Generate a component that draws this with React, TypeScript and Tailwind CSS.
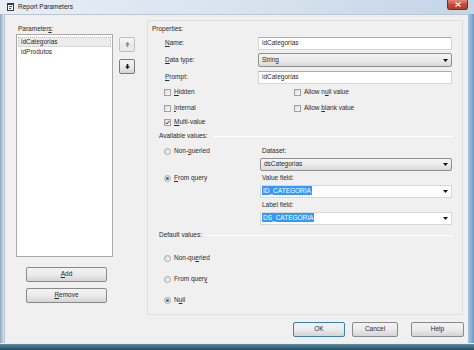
import type { ReactNode } from 'react';

// mnemonic underline
const U = ({ c }: { c: string }) => <span className="underline underline-offset-[1px]">{c}</span>;

const Check = ({ checked }: { checked?: boolean }) => (
    <span className="w-[7px] h-[7px] shrink-0 border border-[#a0a0a0] bg-linear-to-br from-[#dcdcdc] to-[#fbfbfb] flex items-center justify-center">
        {checked && (
            <svg width="5" height="5" viewBox="0 0 5 5">
                <path d="M0.5 2.5 L2 4 L4.5 0.8" stroke="#3a4a6c" strokeWidth="1" fill="none" />
            </svg>
        )}
    </span>
);

const Radio = ({ checked }: { checked?: boolean }) => (
    <span className="w-[7px] h-[7px] shrink-0 rounded-full border border-[#a8a8a8] bg-linear-to-br from-[#d8d8d8] to-[#fbfbfb] flex items-center justify-center">
        {checked && <span className="w-[3px] h-[3px] rounded-full bg-[#3a6a92]" />}
    </span>
);

const Btn = ({ className, children }: { className: string; children: ReactNode }) => (
    <div className={`h-[15px] rounded-[2px] border bg-linear-to-b from-[#f3f3f3] via-[#ebebeb] to-[#d5d5d5] flex items-center justify-center ${className}`}>
        {children}
    </div>
);

const Arrow = () => (
    <svg width="5" height="3" viewBox="0 0 5 3" className="shrink-0">
        <path d="M0 0 H5 L2.5 3 Z" fill="#111" />
    </svg>
);

const CheckItem = ({ checked, children, className = '' }: { checked?: boolean; children: ReactNode; className?: string }) => (
    <div className={`flex items-center gap-[3px] ${className}`}>
        <Check checked={checked} />
        <span>{children}</span>
    </div>
);

const RadioItem = ({ checked, children }: { checked?: boolean; children: ReactNode }) => (
    <div className="h-[10px] flex items-center gap-[3px] pl-[16px]">
        <Radio checked={checked} />
        <span>{children}</span>
    </div>
);

const SectionTitle = ({ children, mt }: { children: ReactNode; mt: string }) => (
    <div className={`h-[10px] flex items-center pl-[11px] pr-[9px] gap-[5px] ${mt}`}>
        <span className="whitespace-nowrap">{children}</span>
        <div className="flex-1 h-px bg-[#d5d5d5] border-b border-white" />
    </div>
);

export default function App() {
    return (
        <div className="w-[474px] h-[350px] flex flex-col overflow-hidden font-['Liberation_Sans',Arial,sans-serif] text-[6.5px] text-[#2a2a2a] leading-none bg-[#c9d8e8]">
            {/* title bar */}
            <div className="h-[14px] flex items-start bg-linear-to-r from-[#e8eef5] via-[#d8e3ef] to-[#c3d5e8]">
                <div className="flex items-center gap-[4px] pl-[7px] pt-[3px]">
                    <svg width="7" height="8" viewBox="0 0 7 8">
                        <rect x="0" y="0" width="7" height="8" fill="#3b3b3b" />
                        <rect x="1" y="2" width="5" height="5" fill="#f4f4f4" />
                        <rect x="2" y="3" width="3" height="1" fill="#555" />
                        <rect x="2" y="5" width="2" height="1" fill="#555" />
                    </svg>
                    <span className="text-[#1b1b1b]">Report Parameters</span>
                </div>
                <div className="ml-auto mr-[6px] w-[21px] h-[10px] rounded-b-[3px] border border-t-0 border-[#7a2a20] bg-linear-to-b from-[#e08a7c] via-[#c74a36] to-[#b53a28] flex items-center justify-center">
                    <svg width="6" height="5" viewBox="0 0 6 5">
                        <path d="M0.5 0.5 L5.5 4.5 M5.5 0.5 L0.5 4.5" stroke="#fff" strokeWidth="1.2" />
                    </svg>
                </div>
            </div>

            <div className="flex flex-1">
                {/* left frame */}
                <div className="w-[4px] bg-linear-to-r from-[#8ea6bd] to-[#d8e3ee]" />

                {/* client area */}
                <div className="w-[464px] bg-[#f0f0f0] flex flex-col border-l border-t border-[#b9c6d3]">
                    <div className="flex mt-[5px] h-[295px]">
                        {/* parameters list */}
                        <div className="ml-[11px] w-[97px] flex flex-col pt-[5px]">
                            <div className="h-[9px] flex items-center pl-[2px]">
                                Parameter<U c="s" />:
                            </div>
                            <div className="h-[223px] bg-white border border-[#a8a8a8] pt-[2px] px-[1px]">
                                <div className="h-[10px] flex items-center pl-[3px] bg-[#ececec] outline-dotted outline-1 outline-[#c4c4c4] -outline-offset-1">idCategorias</div>
                                <div className="h-[10px] flex items-center pl-[3px]">idProdutos</div>
                            </div>
                            <Btn className="mt-[10px] ml-[10px] w-[81px] border-[#8a8a8a]">
                                <U c="A" />dd
                            </Btn>
                            <Btn className="mt-[6px] ml-[10px] w-[81px] border-[#8a8a8a]">
                                <U c="R" />emove
                            </Btn>
                        </div>

                        {/* move buttons */}
                        <div className="ml-[6px] w-[16px] flex flex-col pt-[17px] gap-[7px]">
                            <Btn className="w-[16px] border-[#c0c0c0] from-[#f8f8f8] to-[#e8e8e8]">
                                <svg width="5" height="5" viewBox="0 0 5 5">
                                    <path d="M2.5 0 L5 2.5 H3.3 V5 H1.7 V2.5 H0 Z" fill="#8a8a8a" />
                                </svg>
                            </Btn>
                            <Btn className="w-[16px] border-[#7a7a7a]">
                                <svg width="5" height="5" viewBox="0 0 5 5">
                                    <path d="M2.5 5 L5 2.5 H3.3 V0 H1.7 V2.5 H0 Z" fill="#111" />
                                </svg>
                            </Btn>
                        </div>

                        {/* properties panel */}
                        <div className="ml-[12px] w-[316px] border border-[#e0e0e0] flex flex-col">
                            <div className="h-[10px] mt-[3px] pl-[4px] flex items-center">Properties:</div>

                            <div className="h-[13px] mt-[3px] pl-[17px] flex items-center">
                                <span className="w-[93px]"><U c="N" />ame:</span>
                                <div className="w-[194px] h-full bg-white border border-[#d3d6db] border-t-[#a9adb4] flex items-center pl-[3px]">idCategorias</div>
                            </div>
                            <div className="h-[14px] mt-[3px] pl-[17px] flex items-center">
                                <span className="w-[93px]"><U c="D" />ata type:</span>
                                <div className="w-[194px] h-full rounded-[2px] border border-[#8e8f8f] bg-linear-to-b from-[#f4f4f4] via-[#ebebeb] to-[#d9d9d9] flex items-center pl-[3px] pr-[3px]">
                                    <span className="flex-1">String</span>
                                    <Arrow />
                                </div>
                            </div>
                            <div className="h-[13px] mt-[4px] pl-[17px] flex items-center">
                                <span className="w-[93px]"><U c="P" />rompt:</span>
                                <div className="w-[194px] h-full bg-white border border-[#d3d6db] border-t-[#a9adb4] flex items-center pl-[3px]">idCategorias</div>
                            </div>

                            <div className="h-[9px] mt-[4px] pl-[16px] flex items-center">
                                <CheckItem className="w-[130px]"><U c="H" />idden</CheckItem>
                                <CheckItem>Allow n<U c="u" />ll value</CheckItem>
                            </div>
                            <div className="h-[9px] mt-[7px] pl-[16px] flex items-center">
                                <CheckItem className="w-[130px]"><U c="I" />nternal</CheckItem>
                                <CheckItem>Allow <U c="b" />lank value</CheckItem>
                            </div>
                            <div className="h-[9px] mt-[5px] pl-[16px] flex items-center">
                                <CheckItem checked><U c="M" />ulti-value</CheckItem>
                            </div>

                            <SectionTitle mt="mt-[4px]">Available values:</SectionTitle>

                            <div className="flex mt-[5px]">
                                <div className="w-[112px] flex flex-col">
                                    <RadioItem>Non-<U c="q" />ueried</RadioItem>
                                    <div className="mt-[17px]">
                                        <RadioItem checked><U c="F" />rom query</RadioItem>
                                    </div>
                                </div>
                                <div className="w-[192px] flex flex-col">
                                    <div className="h-[10px] flex items-center pl-[2px]">Dataset:</div>
                                    <div className="h-[13px] mt-[2px] rounded-[2px] border border-[#8e8f8f] bg-linear-to-b from-[#f4f4f4] via-[#ebebeb] to-[#d9d9d9] flex items-center pl-[3px] pr-[3px]">
                                        <span className="flex-1">dsCategorias</span>
                                        <Arrow />
                                    </div>
                                    <div className="h-[10px] mt-[2px] flex items-center pl-[2px]">Value field:</div>
                                    <div className="h-[13px] mt-[2px] bg-white border border-[#d8d8d8] flex items-center pl-[1px] pr-[3px]">
                                        <span className="flex-1"><span className="bg-[#3399ff] text-white px-[1px] py-[1px]">ID_CATEGORIA</span></span>
                                        <Arrow />
                                    </div>
                                    <div className="h-[10px] mt-[2px] flex items-center pl-[2px]">Label field:</div>
                                    <div className="h-[13px] mt-[2px] bg-white border border-[#d8d8d8] flex items-center pl-[1px] pr-[3px]">
                                        <span className="flex-1"><span className="bg-[#3399ff] text-white px-[1px] py-[1px]">DS_CATEGORIA</span></span>
                                        <Arrow />
                                    </div>
                                </div>
                            </div>

                            <SectionTitle mt="mt-[5px]">Default values:</SectionTitle>

                            <div className="mt-[13px]">
                                <RadioItem>Non-qu<U c="e" />ried</RadioItem>
                            </div>
                            <div className="mt-[11px]">
                                <RadioItem>From quer<U c="y" /></RadioItem>
                            </div>
                            <div className="mt-[11px]">
                                <RadioItem checked>N<U c="u" />ll</RadioItem>
                            </div>
                        </div>
                    </div>

                    {/* dialog buttons */}
                    <div className="flex mt-[7px] pl-[288px]">
                        <Btn className="w-[52px] border-[#3c7fb1]">OK</Btn>
                        <Btn className="ml-[7px] w-[46px] border-[#8a8a8a]">Cancel</Btn>
                        <Btn className="ml-[13px] w-[53px] border-[#8a8a8a]">Help</Btn>
                    </div>
                </div>

                {/* right frame */}
                <div className="w-[6px] bg-linear-to-r from-[#a9c3dc] via-[#8fb1d4] to-[#6f95bc]" />
            </div>

            {/* bottom frame */}
            <div className="h-[7px] border-t border-[#e6eef5] bg-linear-to-b from-[#5f8ba3] to-[#234f63]" />
        </div>
    );
}
